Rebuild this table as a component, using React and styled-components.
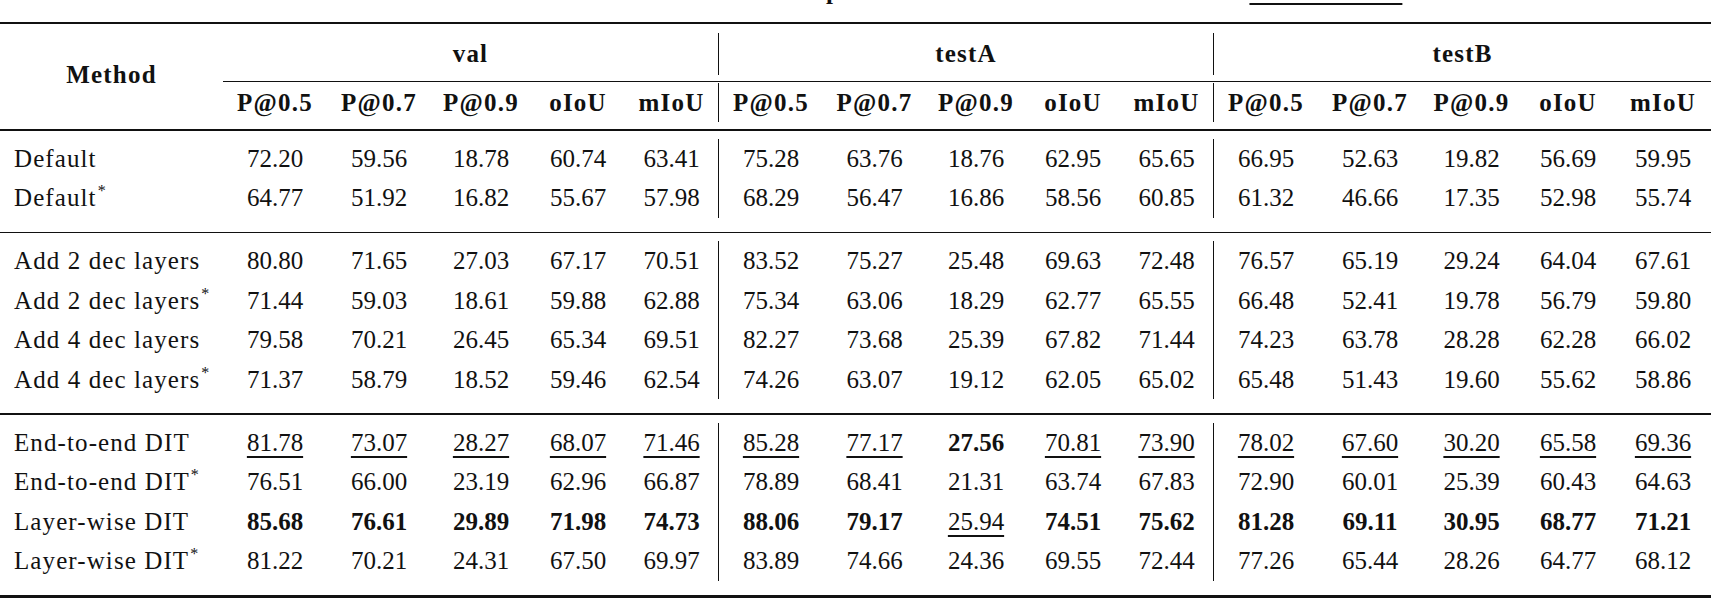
import React from "react";
import styled, { createGlobalStyle } from "styled-components";

const GlobalStyle = createGlobalStyle`
  html, body { margin: 0; padding: 0; background: #ffffff; }
  body {
    font-family: "Liberation Serif", "Times New Roman", serif;
    color: #111111;
    -webkit-font-smoothing: antialiased;
  }
`;

const COLS =
  "223px 104px 104px 100px 94px 93px 105px 103px 100px 94px 93px 105px 104px 99px 94px 96px";

const Page = styled.div`
  width: 1711px;
  overflow: hidden;
`;

const CaptionLine = styled.div`
  height: 11px;
  overflow: hidden;
  display: flex;
  align-items: flex-start;
  font-size: 25px;
  line-height: 30px;
  white-space: nowrap;
`;

const CaptionText = styled.span`
  margin-top: -24px;
  margin-left: ${(p) => p.$offset}px;
  font-weight: ${(p) => (p.$bold ? 700 : 400)};
  letter-spacing: ${(p) => p.$spacing || 0}px;
  text-decoration: ${(p) => (p.$underline ? "underline" : "none")};
  text-decoration-thickness: 1.5px;
  text-underline-offset: 4px;
`;

const Rule = styled.div`
  height: ${(p) => p.$weight}px;
  background: #111111;
  margin-top: ${(p) => p.$top || 0}px;
`;

const HeaderGrid = styled.div`
  display: grid;
  grid-template-columns: ${COLS};
  grid-template-rows: 42px 8px 39px;
  padding: 9px 0 7px;
  font-weight: 700;
  font-size: 25px;
  letter-spacing: 1.2px;
`;

const MethodHead = styled.div`
  grid-column: 1;
  grid-row: 1 / 4;
  display: flex;
  align-items: center;
  justify-content: center;
  padding-bottom: 5px;
`;

const GroupHead = styled.div`
  grid-row: 1;
  grid-column: span 5;
  display: flex;
  align-items: center;
  justify-content: center;
  border-left: ${(p) => (p.$divider ? "1.5px solid #111" : "none")};
`;

const CmidRule = styled.div`
  grid-row: 2;
  grid-column: 2 / -1;
  align-self: start;
  margin-top: 6px;
  border-top: 1.5px solid #111;
`;

const SubHead = styled.div`
  grid-row: 3;
  display: flex;
  align-items: center;
  justify-content: center;
  border-left: ${(p) => (p.$divider ? "1.5px solid #111" : "none")};
`;

const Group = styled.div`
  padding: 8px 0 14px;
`;

const Row = styled.div`
  display: grid;
  grid-template-columns: ${COLS};
  height: 39.5px;
  font-size: 25px;
  line-height: 39.5px;
`;

const MethodCell = styled.div`
  padding-left: 14px;
  letter-spacing: 1.1px;
  white-space: nowrap;
`;

const Star = styled.sup`
  font-size: 16px;
  line-height: 0;
  vertical-align: 10px;
  letter-spacing: 0;
  margin-left: 1px;
`;

const Cell = styled.div`
  text-align: center;
  border-left: ${(p) => (p.$divider ? "1.5px solid #111" : "none")};
`;

const Value = styled.span`
  font-weight: ${(p) => (p.$bold ? 700 : 400)};
  text-decoration: ${(p) => (p.$underline ? "underline" : "none")};
  text-decoration-thickness: 1.5px;
  text-underline-offset: 5px;
`;

const METRICS = ["P@0.5", "P@0.7", "P@0.9", "oIoU", "mIoU"];
const SPLITS = ["val", "testA", "testB"];

const GROUPS = [
  [
    ["Default", false, "72.20 59.56 18.78 60.74 63.41 75.28 63.76 18.76 62.95 65.65 66.95 52.63 19.82 56.69 59.95"],
    ["Default", true, "64.77 51.92 16.82 55.67 57.98 68.29 56.47 16.86 58.56 60.85 61.32 46.66 17.35 52.98 55.74"],
  ],
  [
    ["Add 2 dec layers", false, "80.80 71.65 27.03 67.17 70.51 83.52 75.27 25.48 69.63 72.48 76.57 65.19 29.24 64.04 67.61"],
    ["Add 2 dec layers", true, "71.44 59.03 18.61 59.88 62.88 75.34 63.06 18.29 62.77 65.55 66.48 52.41 19.78 56.79 59.80"],
    ["Add 4 dec layers", false, "79.58 70.21 26.45 65.34 69.51 82.27 73.68 25.39 67.82 71.44 74.23 63.78 28.28 62.28 66.02"],
    ["Add 4 dec layers", true, "71.37 58.79 18.52 59.46 62.54 74.26 63.07 19.12 62.05 65.02 65.48 51.43 19.60 55.62 58.86"],
  ],
  [
    ["End-to-end DIT", false, "u81.78 u73.07 u28.27 u68.07 u71.46 u85.28 u77.17 b27.56 u70.81 u73.90 u78.02 u67.60 u30.20 u65.58 u69.36"],
    ["End-to-end DIT", true, "76.51 66.00 23.19 62.96 66.87 78.89 68.41 21.31 63.74 67.83 72.90 60.01 25.39 60.43 64.63"],
    ["Layer-wise DIT", false, "b85.68 b76.61 b29.89 b71.98 b74.73 b88.06 b79.17 u25.94 b74.51 b75.62 b81.28 b69.11 b30.95 b68.77 b71.21"],
    ["Layer-wise DIT", true, "81.22 70.21 24.31 67.50 69.97 83.89 74.66 24.36 69.55 72.44 77.26 65.44 28.26 64.77 68.12"],
  ],
];

function parse(token) {
  if (token[0] === "b") return { text: token.slice(1), bold: true };
  if (token[0] === "u") return { text: token.slice(1), underline: true };
  return { text: token };
}

function DataRow({ name, star, values }) {
  const cells = values.split(" ").map(parse);
  return (
    <Row>
      <MethodCell>
        {name}
        {star && <Star>*</Star>}
      </MethodCell>
      {cells.map((c, i) => (
        <Cell key={i} $divider={i === 5 || i === 10}>
          <Value $bold={c.bold} $underline={c.underline}>
            {c.text}
          </Value>
        </Cell>
      ))}
    </Row>
  );
}

export default function App() {
  return (
    <Page>
      <GlobalStyle />
      <CaptionLine>
        <CaptionText $offset={826} $bold>
          performance
        </CaptionText>
        <CaptionText $offset={286} $underline $spacing={4.6}>
          underlined
        </CaptionText>
      </CaptionLine>
      <Rule $weight={2} $top={11} />
      <HeaderGrid>
        <MethodHead>Method</MethodHead>
        {SPLITS.map((s, i) => (
          <GroupHead key={s} $divider={i > 0}>
            {s}
          </GroupHead>
        ))}
        <CmidRule />
        {SPLITS.map((s, gi) =>
          METRICS.map((m, mi) => (
            <SubHead key={s + m} $divider={gi > 0 && mi === 0}>
              {m}
            </SubHead>
          ))
        )}
      </HeaderGrid>
      <Rule $weight={1.5} />
      {GROUPS.map((rows, gi) => (
        <React.Fragment key={gi}>
          <Group>
            {rows.map(([name, star, values], ri) => (
              <DataRow key={ri} name={name} star={star} values={values} />
            ))}
          </Group>
          <Rule $weight={gi === GROUPS.length - 1 ? 3 : 1.5} />
        </React.Fragment>
      ))}
    </Page>
  );
}
